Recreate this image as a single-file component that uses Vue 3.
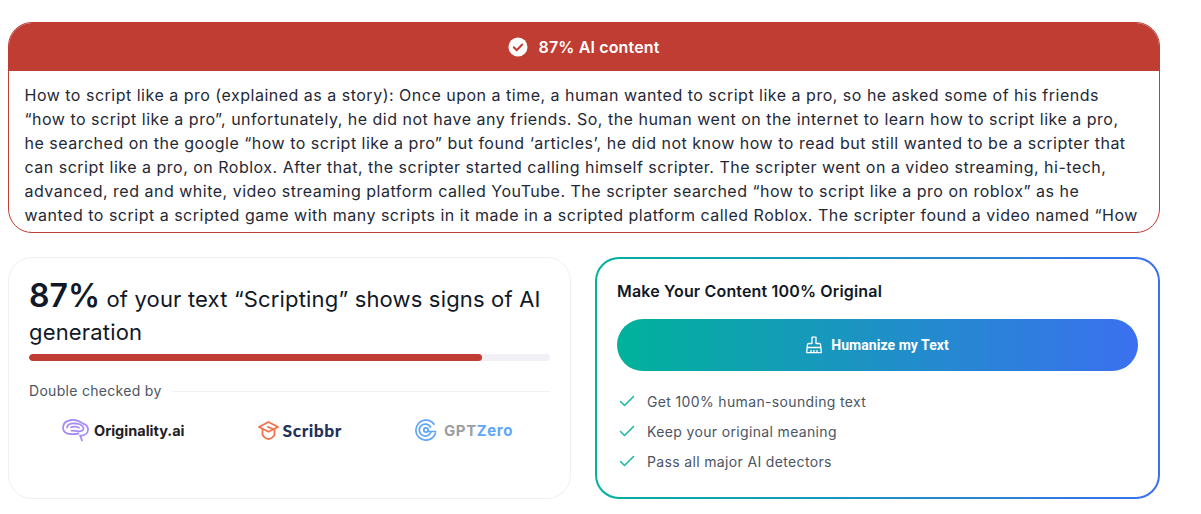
<template>
  <div class="page">
    <!-- Scanned text -->
    <section class="result">
      <header class="result-head">
        <svg width="20" height="20" viewBox="0 0 20 20"><circle cx="10" cy="10" r="9.5" fill="#fff"/><path d="M5.8 10.3l2.9 2.9 5.5-5.7" fill="none" stroke="#bf3d32" stroke-width="2" stroke-linecap="round" stroke-linejoin="round"/></svg>
        <span>87% AI content</span>
      </header>
      <p class="result-text">{{ story }}</p>
    </section>

    <div class="cols">
      <!-- Score -->
      <section class="card score">
        <h2 class="score-title"><b>87%</b> of your text “Scripting” shows signs of AI generation</h2>
        <div class="bar"><div class="bar-fill" :style="{ width: score + '%' }"></div></div>
        <div class="checked"><span>Double checked by</span><i></i></div>
        <div class="logos">
          <div class="logo orig">
            <svg width="27" height="24" viewBox="0 0 27 24" fill="none" stroke="#a58cf8" stroke-width="1.8" stroke-linecap="round" stroke-linejoin="round">
              <path d="M20 22.500l-1.800-4.800c3.800 0 7.600-1.800 7.800-5.700.2-3.600-2.500-5.600-5-6.400C17.500 3 13.800 1.500 9.500 2 5 2.500 1.200 5 1 9.500c-.2 4 3.200 6.400 7.500 6.500 3 .1 5.500 0 8-.5"/>
              <path d="M5 9.500c.5-2.700 4-4.200 8-4 4 .2 8 2 8.500 4.500.4 2.300-2 3.300-4.500 3.300-3 0-5-.6-7.500-.6"/>
              <path d="M9 9.300c2-1 6-.9 8 .5"/>
            </svg>
            <span class="t-orig">Originality.ai</span>
          </div>
          <div class="logo scribbr">
            <svg width="21" height="19" viewBox="0 0 21 19" fill="none" stroke="#f4704b" stroke-width="1.800" stroke-linecap="round" stroke-linejoin="round">
              <path d="M10.500 1L20 6l-9.500 4.800L1 6z"/>
              <path d="M4.500 8.500v5c0 1 2.800 4.500 6 4.500s6-3.500 6-4.500v-5"/>
              <path d="M10 6l5 2"/>
            </svg>
            <span class="t-scribbr">Scribbr</span>
          </div>
          <div class="logo gpt">
            <svg width="22" height="22" viewBox="0 0 22 22" fill="none" stroke="#60a5fa" stroke-width="1.700" stroke-linecap="round">
              <path d="M19 5.200A10 10 0 1 0 20.500 14"/>
              <path d="M15.500 8a6 6 0 1 0 .5 5"/>
              <circle cx="11" cy="11" r="2.200"/>
              <path d="M13.500 12.500h7"/>
            </svg>
            <span class="t-gpt">GPT<em>Zero</em></span>
          </div>
        </div>
      </section>

      <!-- Humanize -->
      <section class="card-gradient">
        <h3 class="cta-title">Make Your Content 100% Original</h3>
        <button class="cta-btn">
          <svg width="16" height="18" viewBox="0 0 16 18" fill="none" stroke="#fff" stroke-width="1.300" stroke-linejoin="round">
            <path d="M6 1.200h4v6.300h3.200c.8 0 1.300.6 1.400 1.300l.7 7.800H.7l.7-7.800c.1-.7.6-1.300 1.400-1.300H6z"/>
            <path d="M1.300 11.500h13.400M5 14v2.500M8 14v2.500M11 14v2.500"/>
          </svg>
          <span>Humanize my Text</span>
        </button>
        <ul class="perks">
          <li v-for="p in perks" :key="p">
            <svg width="16" height="16" viewBox="0 0 16 16" fill="none" stroke="#14b8a0" stroke-width="1.500" stroke-linecap="round" stroke-linejoin="round"><path d="M1.500 8.500l4 4 9-9"/></svg>
            <span>{{ p }}</span>
          </li>
        </ul>
      </section>
    </div>
  </div>
</template>

<script setup>
const score = 87
const perks = ['Get 100% human-sounding text', 'Keep your original meaning', 'Pass all major AI detectors']
const story = 'How to script like a pro (explained as a story): Once upon a time, a human wanted to script like a pro, so he asked some of his friends “how to script like a pro”, unfortunately, he did not have any friends. So, the human went on the internet to learn how to script like a pro, he searched on the google “how to script like a pro” but found ‘articles’, he did not know how to read but still wanted to be a scripter that can script like a pro, on Roblox. After that, the scripter started calling himself scripter. The scripter went on a video streaming, hi-tech, advanced, red and white, video streaming platform called YouTube. The scripter searched “how to script like a pro on roblox” as he wanted to script a scripted game with many scripts in it made in a scripted platform called Roblox. The scripter found a video named “How to script like a pro” and watched it.'
</script>

<style>
html, body { margin: 0; background: #fff; }
</style>

<style scoped>
.page {
  width: 1152px;
  margin-left: 8px;
  padding-top: 22px;
  font-family: Inter, "Liberation Sans", sans-serif;
  color: #111827;
}
.result {
  height: 211px;
  box-sizing: border-box;
  border: 1px solid #bf3d32;
  border-radius: 24px;
  overflow: hidden;
}
.result-head {
  height: 49px;
  background: #bf3d32;
  color: #fff;
  display: flex;
  align-items: center;
  justify-content: center;
  gap: 10px;
  font-size: 16px;
  font-weight: 600;
  letter-spacing: 0.15px;
  margin: -1px -1px 0;
}
.result-text {
  margin: 0;
  padding: 12px 19.5px 0 15.5px;
  font-size: 16px;
  line-height: 24px;
  letter-spacing: 0.5px;
  color: #1f2937;
}
.cols {
  display: grid;
  grid-template-columns: 563px 565px;
  gap: 24px;
  margin-top: 24px;
}
.card {
  height: 242px;
  box-sizing: border-box;
  border: 1px solid #eef0f4;
  border-radius: 24px;
  padding: 20px;
}
.score-title {
  margin: 0;
  padding-top: 1px;
  font-size: 22px;
  line-height: 33px;
  font-weight: 400;
  letter-spacing: 0.17px;
  color: #111827;
}
.score-title b {
  font-size: 32px;
  font-weight: 600;
  letter-spacing: 0;
}
.bar {
  height: 7px;
  margin-top: 5px;
  background: #f0f0f5;
  border-radius: 4px;
  overflow: hidden;
}
.bar-fill {
  height: 100%;
  background: #bf3d32;
  border-radius: 4px;
}
.checked {
  display: flex;
  align-items: center;
  gap: 10px;
  margin-top: 20px;
  font-size: 14px;
  line-height: 20px;
  letter-spacing: 0.3px;
  color: #4b5563;
}
.checked i {
  flex: 1;
  height: 1px;
  background: #f0f0f5;
}
.logos {
  display: flex;
  justify-content: space-between;
  padding: 0 37px 0 33px;
  margin-top: 16px;
}
.logo {
  display: flex;
  align-items: center;
  height: 26px;
}
.orig { gap: 5px; }
.scribbr { gap: 4px; }
.gpt { gap: 7px; }
.t-orig { font-size: 14.5px; font-weight: 700; color: #1f2025; }
.t-scribbr { font-family: Lato, sans-serif; font-size: 17.5px; font-weight: 900; letter-spacing: 0.5px; color: #22315a; }
.t-gpt { font-size: 15px; font-weight: 700; color: #9b9ea3; letter-spacing: 0.6px; }
.t-gpt em { font-style: normal; color: #60a5fa; }
.card-gradient {
  height: 242px;
  box-sizing: border-box;
  border: 2px solid transparent;
  border-radius: 24px;
  padding: 20px;
  background:
    linear-gradient(#fff, #fff) padding-box,
    linear-gradient(90deg, #00b29b, #3b70f0) border-box;
}
.cta-title {
  margin: 0;
  font-size: 16px;
  line-height: 24px;
  font-weight: 600;
  letter-spacing: 0.16px;
  color: #111827;
}
.cta-btn {
  width: 100%;
  height: 52px;
  margin-top: 16px;
  border: 0;
  border-radius: 26px;
  background: linear-gradient(90deg, #00b29b, #3b70f0);
  color: #fff;
  display: flex;
  align-items: center;
  justify-content: center;
  gap: 9px;
  font-family: Roboto, sans-serif;
  font-size: 14px;
  font-weight: 700;
  letter-spacing: 0.05px;
}
.perks {
  list-style: none;
  margin: 19px 0 0;
  padding: 0;
  display: flex;
  flex-direction: column;
  gap: 8px;
}
.perks li {
  display: flex;
  align-items: center;
  gap: 12px;
  padding-left: 2px;
  height: 22px;
  font-size: 14px;
  color: #4b5563;
  letter-spacing: 0.35px;
}
</style>
